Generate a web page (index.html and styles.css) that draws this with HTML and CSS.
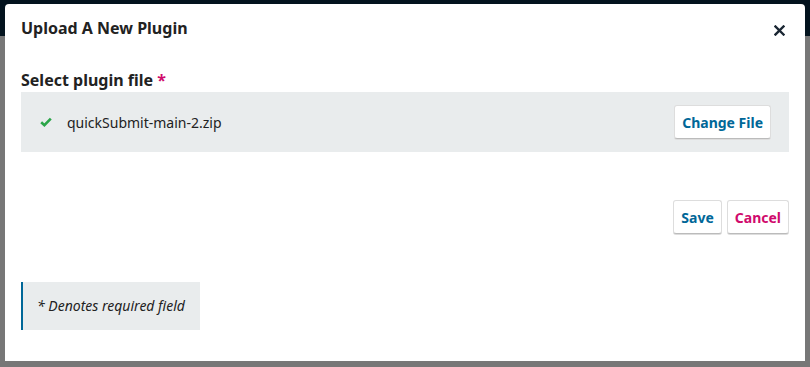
FILE: index.html
```html
<!DOCTYPE html>
<html lang="en">
<head>
<meta charset="utf-8">
<title>Upload A New Plugin</title>
<link rel="stylesheet" href="styles.css">
</head>
<body>
<div class="modal">
  <div class="modal-header">
    <h2 class="modal-title">Upload A New Plugin</h2>
    <button class="close" aria-label="Close">
      <svg width="11" height="11" viewBox="0 0 11 11"><path d="M1.5 1.5 L9.5 9.5 M9.5 1.5 L1.5 9.5" stroke="#1a2633" stroke-width="2.4" stroke-linecap="square"/></svg>
    </button>
  </div>
  <div class="modal-body">
    <div class="label">Select plugin file <span class="req">*</span></div>
    <div class="file-box">
      <div class="file-info">
        <svg class="check" width="12" height="10" viewBox="0 0 12 10"><path d="M1.2 5.2 L4.4 8.2 L10.8 1.6" fill="none" stroke="#2aa548" stroke-width="2.6"/></svg>
        <span class="file-name">quickSubmit-main-2.zip</span>
      </div>
      <button class="btn btn-primary">Change File</button>
    </div>
    <div class="actions">
      <button class="btn btn-primary">Save</button>
      <button class="btn btn-cancel">Cancel</button>
    </div>
    <div class="note">* Denotes required field</div>
  </div>
</div>
</body>
</html>
```
FILE: styles.css
```css
html, body {
  margin: 0;
  padding: 0;
}
body {
  width: 810px;
  height: 367px;
  overflow: hidden;
  background: linear-gradient(to bottom, #03131e 0, #03131e 36px, #777777 36px, #777777 100%);
  font-family: "Noto Sans", "Liberation Sans", sans-serif;
  color: #222222;
  padding: 4px 5px 0 5px;
  box-sizing: border-box;
}
.modal {
  width: 800px;
  height: 357px;
  background: #ffffff;
  border-radius: 4px 4px 0 0;
  box-sizing: border-box;
}
.modal-header {
  display: flex;
  justify-content: space-between;
  align-items: center;
  padding: 10px 20px 0 16px;
  height: 28px;
}
.modal-title {
  margin: 0;
  font-size: 16px;
  font-weight: 700;
  line-height: 28px;
  color: #222222;
}
.close {
  border: 0;
  background: none;
  padding: 0;
  width: 11px;
  height: 11px;
  display: flex;
  margin-top: 4px;
}
.modal-body {
  padding: 28px 16px 0 16px;
}
.label {
  font-size: 16px;
  font-weight: 700;
  line-height: 20px;
  color: #222222;
  margin-bottom: 2px;
}
.req {
  color: #d00a6c;
}
.file-box {
  height: 60px;
  background: #e9eced;
  display: flex;
  align-items: center;
  justify-content: space-between;
  padding: 0 18px 0 19px;
}
.file-info {
  display: flex;
  align-items: center;
}
.check {
  margin-right: 15px;
}
.file-name {
  font-size: 14px;
  color: #222222;
}
.btn {
  font-family: "Noto Sans", "Liberation Sans", sans-serif;
  font-size: 14px;
  font-weight: 700;
  height: 34px;
  padding: 0 7px;
  background: #ffffff;
  border: 1px solid #dddddd;
  border-bottom-color: #bbbbbb;
  border-radius: 3px;
  box-shadow: 0 1px 0 #dddddd;
  cursor: pointer;
}
.btn-primary {
  color: #006798;
}
.btn-cancel {
  color: #d00a6c;
}
.actions {
  display: flex;
  justify-content: flex-end;
  gap: 5px;
  margin-top: 48px;
}
.note {
  margin-top: 48px;
  width: 179px;
  height: 48px;
  box-sizing: border-box;
  background: #e9eced;
  border-left: 2px solid #006798;
  font-size: 14px;
  font-style: italic;
  line-height: 48px;
  padding-left: 14px;
  color: #222222;
}
```
